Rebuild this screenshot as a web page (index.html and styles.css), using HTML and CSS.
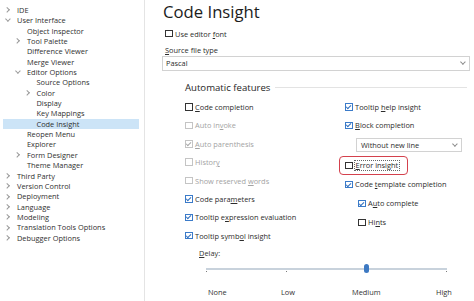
FILE: index.html
```html
<!DOCTYPE html>
<html>
<head>
<meta charset="utf-8">
<link rel="stylesheet" href="styles.css">
</head>
<body>
<div class="app">
  <nav class="side">
    <ul class="tree">
      <li class="l0"><span class="tw c"></span>IDE</li>
      <li class="l0"><span class="tw o"></span>User Interface</li>
      <li class="l1"><span class="tw"></span>Object Inspector</li>
      <li class="l1"><span class="tw c"></span>Tool Palette</li>
      <li class="l1"><span class="tw"></span>Difference Viewer</li>
      <li class="l1"><span class="tw"></span>Merge Viewer</li>
      <li class="l1"><span class="tw o"></span>Editor Options</li>
      <li class="l2"><span class="tw"></span>Source Options</li>
      <li class="l2"><span class="tw c"></span>Color</li>
      <li class="l2"><span class="tw"></span>Display</li>
      <li class="l2"><span class="tw"></span>Key Mappings</li>
      <li class="l2 sel"><span class="tw"></span>Code Insight</li>
      <li class="l1"><span class="tw"></span>Reopen Menu</li>
      <li class="l1"><span class="tw"></span>Explorer</li>
      <li class="l1"><span class="tw c"></span>Form Designer</li>
      <li class="l1"><span class="tw"></span>Theme Manager</li>
      <li class="l0"><span class="tw c"></span>Third Party</li>
      <li class="l0"><span class="tw c"></span>Version Control</li>
      <li class="l0"><span class="tw c"></span>Deployment</li>
      <li class="l0"><span class="tw c"></span>Language</li>
      <li class="l0"><span class="tw c"></span>Modeling</li>
      <li class="l0"><span class="tw c"></span>Translation Tools Options</li>
      <li class="l0"><span class="tw c"></span>Debugger Options</li>
    </ul>
  </nav>
  <main class="main">
    <h1 class="title">Code Insight</h1>
    <div class="chk top-chk"><span class="cb"></span><span class="lbl">Use editor <u>f</u>ont</span></div>
    <div class="field-label"><u>S</u>ource file type</div>
    <div class="select wide"><span>Pascal</span><span class="chev"></span></div>

    <div class="group-head"><span>Automatic features</span><span class="rule"></span></div>
    <div class="group">
      <div class="col">
        <div class="chk row"><span class="cb"></span><span class="lbl"><u>C</u>ode completion</span></div>
        <div class="chk row dis"><span class="cb"></span><span class="lbl">Auto in<u>v</u>oke</span></div>
        <div class="chk row dis"><span class="cb on"></span><span class="lbl"><u>A</u>uto parenthesis</span></div>
        <div class="chk row dis"><span class="cb"></span><span class="lbl">Histor<u>y</u></span></div>
        <div class="chk row dis"><span class="cb"></span><span class="lbl">Show reserved <u>w</u>ords</span></div>
        <div class="chk row"><span class="cb on"></span><span class="lbl">Code para<u>m</u>eters</span></div>
        <div class="chk row"><span class="cb on"></span><span class="lbl">Tooltip e<u>x</u>pression evaluation</span></div>
        <div class="chk row"><span class="cb on"></span><span class="lbl">Tooltip symb<u>o</u>l insight</span></div>
      </div>
      <div class="col">
        <div class="chk row"><span class="cb on"></span><span class="lbl">Tooltip <u>h</u>elp insight</span></div>
        <div class="chk row"><span class="cb on"></span><span class="lbl"><u>B</u>lock completion</span></div>
        <div class="sel-row"><div class="select small"><span>Without new line</span><span class="chev"></span></div></div>
        <div class="chk row2 err"><span class="cb"></span><span class="lbl focus"><u>E</u>rror insight</span></div>
        <div class="chk row2"><span class="cb on"></span><span class="lbl">Code <u>t</u>emplate completion</span></div>
        <div class="chk row2 sub"><span class="cb on"></span><span class="lbl">A<u>u</u>to complete</span></div>
        <div class="chk row2 sub"><span class="cb"></span><span class="lbl">Hi<u>n</u>ts</span></div>
      </div>
    </div>
    <div class="delay"><u>D</u>elay:</div>
    <div class="slider">
      <div class="track"></div>
      <div class="ticks"><i></i><i></i><i></i><i></i></div>
      <div class="thumb"></div>
    </div>
    <div class="scale"><span>None</span><span>Low</span><span>Medium</span><span>High</span></div>
  </main>
</div>
</body>
</html>
```
FILE: styles.css
```css
html, body {
  margin: 0;
  padding: 0;
  background: #ffffff;
}
body {
  font-family: "Open Sans", "Noto Sans", sans-serif;
  font-size: 7.4px;
  color: #2c2c2c;
  width: 474px;
  height: 301px;
  overflow: hidden;
}
.app {
  display: flex;
  height: 301px;
}
.side {
  width: 145px;
  border-right: 1px solid #e4e4e4;
  box-sizing: border-box;
  flex: none;
}
.tree {
  list-style: none;
  margin: 0;
  padding: 4.8px 0 0 3px;
  width: 136px;
}
.tree li {
  display: flex;
  align-items: center;
  height: 10.36px;
  line-height: 10.36px;
  white-space: nowrap;
  color: #303030;
}
.tree li.l0 { padding-left: 0; }
.tree li.l1 { padding-left: 10px; }
.tree li.l2 { padding-left: 19.5px; }
.tree li.sel { background: #cce4f7; }
.tw {
  width: 14px;
  flex: none;
  display: flex;
  align-items: center;
  height: 100%;
}
.tw.c::before {
  content: "";
  width: 2.6px;
  height: 2.6px;
  border-right: 0.8px solid #9a9a9a;
  border-bottom: 0.8px solid #9a9a9a;
  transform: rotate(-45deg);
  margin-left: 2px;
}
.tw.o::before {
  content: "";
  width: 2.8px;
  height: 2.8px;
  border-right: 0.8px solid #9a9a9a;
  border-bottom: 0.8px solid #9a9a9a;
  transform: rotate(45deg);
  margin-left: 2.5px;
  margin-top: -2px;
}

.main {
  flex: 1;
  padding: 2px 4px 0 18px;
  display: flex;
  flex-direction: column;
  min-width: 0;
}
.title {
  margin: 0;
  font-weight: 400;
  font-size: 16.7px;
  line-height: 20px;
  height: 20px;
  color: #1c1c1c;
  letter-spacing: 0;
}
u {
  text-decoration: underline;
  text-decoration-thickness: 0.6px;
  text-underline-offset: 1px;
}
.chk {
  display: flex;
  align-items: center;
  white-space: nowrap;
}
.lbl {
  white-space: pre;
}
.cb {
  width: 7.5px;
  height: 7.5px;
  box-sizing: border-box;
  border: 0.9px solid #333333;
  background: #fff;
  margin-right: 2.6px;
  flex: none;
  display: flex;
  align-items: center;
  justify-content: center;
}
.cb.on {
  border-color: #3b7bc9;
}
.cb.on::after {
  content: "";
  width: 3.8px;
  height: 1.8px;
  border-left: 1px solid #2f6fbf;
  border-bottom: 1px solid #2f6fbf;
  transform: rotate(-45deg);
  margin-top: -1px;
}
.dis {
  color: #a3a3a3;
}
.dis .cb {
  border-color: #c4c4c4;
}
.dis .cb.on::after {
  border-color: #a8a8a8;
}
.top-chk {
  margin-top: 4.5px;
  height: 14px;
  padding-left: 2px;
}
.field-label {
  margin-top: 4px;
  height: 11px;
  line-height: 11px;
  padding-left: 2px;
}
.select {
  display: flex;
  align-items: center;
  justify-content: space-between;
  box-sizing: border-box;
  border: 1px solid #d2d2d2;
  background: #fff;
  padding: 0 4px 0 3px;
}
.select.wide {
  height: 15px;
  margin-left: -1px;
}
.chev {
  width: 2.8px;
  height: 2.8px;
  border-right: 0.8px solid #8a8a8a;
  border-bottom: 0.8px solid #8a8a8a;
  transform: rotate(45deg);
  margin-top: -2px;
}
.group-head {
  margin-top: 9.5px;
  height: 14px;
  display: flex;
  align-items: center;
  padding-left: 22px;
  padding-right: 3px;
  font-size: 9.6px;
  color: #262626;
}
.group-head .rule {
  flex: 1;
  height: 1px;
  background: #e3e3e3;
  margin-left: 5px;
}
.group {
  margin-top: 3.8px;
  padding-left: 22px;
  display: grid;
  grid-template-columns: 160px 1fr;
}
.col {
  display: flex;
  flex-direction: column;
}
.row {
  height: 18.4px;
}
.row2 {
  height: 19px;
}
.sel-row {
  height: 21px;
  display: flex;
  align-items: center;
}
.select.small {
  height: 14.5px;
  width: 106px;
  margin-left: 11px;
  padding-left: 4px;
}
.err {
  height: 19.4px;
  position: relative;
}
.err::after {
  content: "";
  position: absolute;
  left: -6px;
  top: 0.5px;
  width: 69px;
  height: 19px;
  box-sizing: border-box;
  border: 1.4px solid #d4414d;
  border-radius: 4px;
}
.focus {
  outline: 0.6px dotted #666;
  outline-offset: 0;
  padding: 0 0.5px;
  line-height: 9px;
}
.sub {
  padding-left: 13px;
}
.delay {
  height: 16px;
  line-height: 16px;
  padding-left: 36px;
  color: #333;
}
.slider {
  position: relative;
  margin-left: 43px;
  width: 241px;
  height: 16px;
}
.track {
  margin-top: 7px;
  height: 1.6px;
  background: #c8d2dc;
}
.ticks {
  display: flex;
  justify-content: space-between;
  margin-top: 1.2px;
}
.ticks i {
  width: 1px;
  height: 1.6px;
  background: #7a7a7a;
}
.thumb {
  position: absolute;
  left: 158px;
  top: 3px;
  width: 5px;
  height: 9.5px;
  border-radius: 2.5px;
  background: #3d79c2;
}
.scale {
  margin-top: 6px;
  height: 18px;
  line-height: 18px;
  display: grid;
  grid-template-columns: 73px 71px 84px auto;
  padding-left: 45px;
  color: #333;
}
```
